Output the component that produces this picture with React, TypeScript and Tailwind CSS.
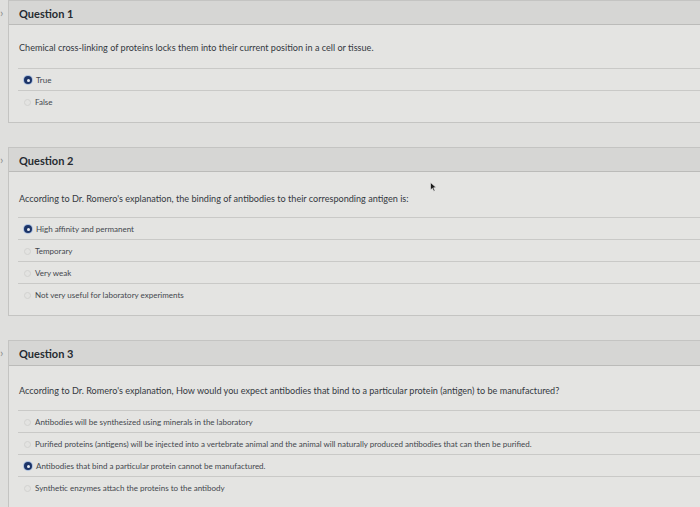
import React from 'react';

type Question = {
    title: string;
    text: string;
    options: string[];
    selected: number;
    gap: string;
};

const questions: Question[] = [
    {
        title: 'Question 1',
        text: 'Chemical cross-linking of proteins locks them into their current position in a cell or tissue.',
        options: ['True', 'False'],
        selected: 0,
        gap: 'pt-[17px] pb-[14px]',
    },
    {
        title: 'Question 2',
        text: "According to Dr. Romero's explanation, the binding of antibodies to their corresponding antigen is:",
        options: [
            'High affinity and permanent',
            'Temporary',
            'Very weak',
            'Not very useful for laboratory experiments',
        ],
        selected: 0,
        gap: 'pt-[21px] pb-[12px]',
    },
    {
        title: 'Question 3',
        text: "According to Dr. Romero's explanation, How would you expect antibodies that bind to a particular protein (antigen) to be manufactured?",
        options: [
            'Antibodies will be synthesized using minerals in the laboratory',
            'Purified proteins (antigens) will be injected into a vertebrate animal and the animal will naturally produced antibodies that can then be purified.',
            'Antibodies that bind a particular protein cannot be manufactured.',
            'Synthetic enzymes attach the proteins to the antibody',
        ],
        selected: 2,
        gap: 'pt-[19px] pb-[13px]',
    },
];

function Radio({ checked }: { checked: boolean }) {
    if (checked) {
        return (
            <span className="flex h-[8px] w-[8px] shrink-0 items-center justify-center rounded-full bg-[#1c3468] shadow-[0_0_0_1px_rgba(90,140,220,0.4)]">
                <span className="h-[3px] w-[3px] rounded-full bg-[#e8ecf2]" />
            </span>
        );
    }
    return <span className="h-[7px] w-[7px] shrink-0 rounded-full border border-[#d2d2d0] bg-[#e3e3e1]" />;
}

function QuestionCard({ q, last }: { q: Question; last?: boolean }) {
    return (
        <div className="flex">
            {/* collapse chevron beside the header */}
            <div className="w-[8px] shrink-0 pt-[7px] text-[12px] leading-none text-[#8e8e8c]">›</div>
            <div className={`w-[720px] shrink-0 border border-[#c4c4c2] bg-[#e4e4e2] ${last ? 'border-b-0 pb-[40px]' : ''}`}>
                <div
                    className={`flex items-center border-b border-[#bbbbb9] bg-[#d6d6d4] px-[10px] pt-[3px] text-[11px] font-bold text-[#262b31] ${last ? 'h-[25px]' : 'h-[24px]'}`}
                >
                    {q.title}
                </div>
                <div className="px-[9px]">
                    <p className={`${q.gap} pl-[1px] text-[9.1px] leading-[12px] text-[#34393f]`}>{q.text}</p>
                    <div className="pb-[10px]">
                        {q.options.map((o, i) => (
                            <div
                                key={o}
                                className="flex h-[22px] items-center gap-[4px] border-t border-[#c9c9c7] pl-[6px] pt-[1px]"
                            >
                                <Radio checked={i === q.selected} />
                                <span className="text-[8px] leading-none text-[#43474d]">{o}</span>
                            </div>
                        ))}
                    </div>
                </div>
            </div>
        </div>
    );
}

export default function App() {
    return (
        <div
            className="relative h-[507px] w-[700px] overflow-hidden bg-[#dfdfdd]"
            style={{ fontFamily: 'Lato, "Open Sans", sans-serif' }}
        >
            <div className="flex flex-col gap-[24px]">
                <QuestionCard q={questions[0]} />
                <QuestionCard q={questions[1]} />
                <QuestionCard q={questions[2]} last />
            </div>

            {/* mouse pointer */}
            <svg className="absolute left-[430px] top-[182px]" width="7" height="10" viewBox="0 0 7 10">
                <path d="M0.5 0.5 L0.5 8 L2.4 6.3 L3.8 9.3 L5 8.7 L3.6 5.8 L6.2 5.6 Z" fill="#1a1a1a" stroke="#f2f2f2" strokeWidth="0.6" />
            </svg>
        </div>
    );
}
